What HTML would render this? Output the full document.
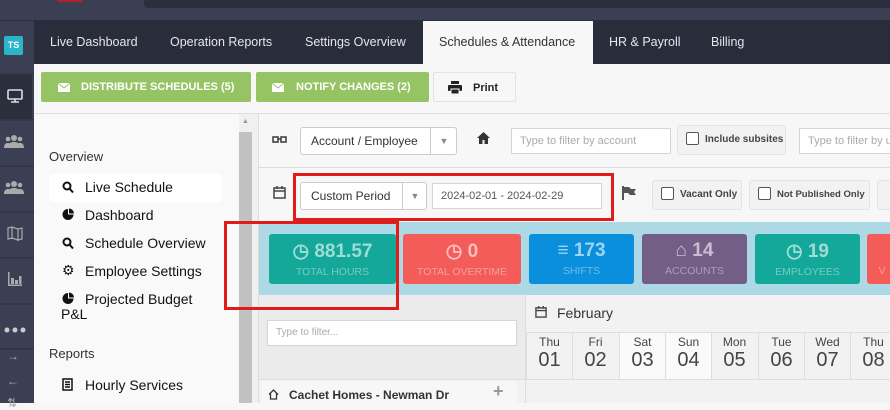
<!DOCTYPE html>
<html><head><style>
*{box-sizing:border-box;margin:0;padding:0}
body{width:890px;height:403px;overflow:hidden;background:#f7f7f7;font-family:"Liberation Sans",Arial,sans-serif;position:relative}
.a{position:absolute}
.top{left:0;top:0;width:890px;height:21px;background:#3b3f53}
.side{left:0;top:21px;width:34px;height:382px;background:#3b3f53}
.sep{position:absolute;left:0;width:34px;height:2px;background:#33364a}
.nav{left:34px;top:21px;width:856px;height:43px;background:#292c3b}
.tab{position:absolute;top:14px;color:#e6e6ea;font-size:12.5px}
.btn{position:absolute;top:72px;height:30px;border-radius:2px;color:#fff;font-weight:bold;font-size:11px;line-height:30px;white-space:nowrap}
.lp{left:34px;top:114px;width:205px;height:289px;background:#f9f9f9}
.it{position:absolute;left:85px;font-size:14px;color:#111;white-space:nowrap}
.ic{position:absolute;left:62px}
.sel{position:absolute;background:#fff;border:1px solid #ccc;border-radius:3px;height:28px;font-size:12px;color:#333;line-height:26px;padding-left:10px}
.inp{position:absolute;background:#fff;border:1px solid #d5d5d5;height:26px;font-size:11px;color:#aaa;line-height:24px;padding-left:8px;white-space:nowrap;overflow:hidden}
.chk{position:absolute;background:#f2f2f2;border:1px solid #e3e3e3;border-radius:3px;height:30px;font-size:10px;font-weight:bold;color:#444;line-height:28px;padding-left:8px;white-space:nowrap;overflow:hidden}
.chk i{display:inline-block;width:13px;height:13px;border:1px solid #555;border-radius:2px;background:#fff;vertical-align:-3px;margin-right:6px}
.card{position:absolute;top:234px;height:50px;border-radius:3px;color:rgba(255,255,255,.4);text-align:center;white-space:nowrap;overflow:hidden}
.card b{display:block;font-size:19px;color:rgba(255,255,255,.6);margin-top:6px}
.card span{display:block;font-size:10.5px;margin-top:3px}
.day{position:absolute;top:333px;width:46px;text-align:center;color:#444;border-left:1px solid #ddd;height:46px}
.day s{text-decoration:none;display:block;font-size:12px;margin-top:2px}
.day u{text-decoration:none;display:block;font-size:20px}
</style></head><body>
<div class="a top"></div>
<div class="a" style="left:144px;top:0;width:746px;height:8px;background:#2b2e3c;border-radius:0 0 0 4px"></div>
<div class="a" style="left:57px;top:0;width:26px;height:2px;background:#b3202a"></div>
<div class="a" style="left:0;top:20px;width:890px;height:1px;background:#2b2e3c"></div>
<div class="a side">
 <div style="position:absolute;left:4px;top:15px;width:19px;height:19px;background:#2bb5c8;border-radius:2px;color:#fff;font-size:9px;font-weight:bold;text-align:center;line-height:19px">TS</div>
 <div class="sep" style="top:52px"></div>
 <div style="position:absolute;left:0;top:54px;width:32px;height:44px;background:#2b2e3d"></div>
 <svg style="position:absolute;left:7px;top:67px" width="16" height="16" viewBox="0 0 16 16" fill="none" stroke="#ddd" stroke-width="1.6"><rect x="1" y="2" width="14" height="9" rx="1"/><path d="M8 11v3M4 14h8"/></svg>
 <div class="sep" style="top:98px"></div>
 <svg style="position:absolute;left:4px;top:113px" width="20" height="14" viewBox="0 0 20 14" fill="#aaa"><circle cx="10" cy="4" r="3"/><path d="M4 14c0-5 3-6 6-6s6 1 6 6z"/><circle cx="4" cy="5" r="2.3"/><circle cx="16" cy="5" r="2.3"/><path d="M0 14c0-4 2-5 4-5s3 1 3 5zM13 14c0-4 1-5 3-5s4 1 4 5z"/></svg>
 <div class="sep" style="top:144px"></div>
 <svg style="position:absolute;left:4px;top:159px" width="20" height="14" viewBox="0 0 20 14" fill="#aaa"><circle cx="10" cy="4" r="3"/><path d="M4 14c0-5 3-6 6-6s6 1 6 6z"/><circle cx="4" cy="5" r="2.3"/><circle cx="16" cy="5" r="2.3"/><path d="M0 14c0-4 2-5 4-5s3 1 3 5zM13 14c0-4 1-5 3-5s4 1 4 5z"/></svg>
 <div class="sep" style="top:190px"></div>
 <svg style="position:absolute;left:7px;top:204px" width="16" height="16" viewBox="0 0 16 16" fill="none" stroke="#aaa" stroke-width="1.2"><path d="M1 3l4-1 6 2 4-1v11l-4 1-6-2-4 1z M5 2v12 M11 4v12"/></svg>
 <div class="sep" style="top:236px"></div>
 <svg style="position:absolute;left:7px;top:250px" width="16" height="16" viewBox="0 0 16 16" fill="#aaa"><rect x="1" y="1" width="1.5" height="14"/><rect x="1" y="13.5" width="14" height="1.5"/><rect x="4" y="7" width="3" height="6"/><rect x="8" y="9" width="3" height="4"/><rect x="12" y="5" width="2.5" height="8"/></svg>
 <div class="sep" style="top:282px"></div>
 <svg style="position:absolute;left:4px;top:306px" width="22" height="6" viewBox="0 0 22 6" fill="#ccc"><circle cx="3" cy="3" r="2.5"/><circle cx="11" cy="3" r="2.5"/><circle cx="19" cy="3" r="2.5"/></svg>
 <div class="sep" style="top:327px"></div>
 <div style="position:absolute;left:7px;top:328px;color:#aaa;font-size:12px">&#8594;</div>
 <div style="position:absolute;left:7px;top:353px;color:#aaa;font-size:12px">&#8592;</div>
 <div style="position:absolute;left:7px;top:375px;color:#aaa;font-size:12px">&#8645;</div>
</div>
<div class="a nav">
 <div class="tab" style="left:16px">Live Dashboard</div>
 <div class="tab" style="left:136px">Operation Reports</div>
 <div class="tab" style="left:271px">Settings Overview</div>
 <div style="position:absolute;left:389px;top:0;width:170px;height:43px;background:#f7f7f7"></div>
 <div class="tab" style="left:405px;color:#333">Schedules &amp; Attendance</div>
 <div class="tab" style="left:575px">HR &amp; Payroll</div>
 <div class="tab" style="left:677px">Billing</div>
</div>
<div class="btn" style="left:41px;width:210px;background:#96c464"><svg style="position:absolute;left:17px;top:11px" width="12" height="9" viewBox="0 0 12 9"><rect width="12" height="9" fill="#fff"/><path d="M0 0l6 5 6-5" fill="none" stroke="#96c464"/></svg><span style="margin-left:40px">DISTRIBUTE SCHEDULES (5)</span></div>
<div class="btn" style="left:256px;width:173px;background:#96c464"><svg style="position:absolute;left:16px;top:11px" width="12" height="9" viewBox="0 0 12 9"><rect width="12" height="9" fill="#fff"/><path d="M0 0l6 5 6-5" fill="none" stroke="#96c464"/></svg><span style="margin-left:40px">NOTIFY CHANGES (2)</span></div>
<div class="btn" style="left:433px;width:83px;background:#f7f7f7;border:1px solid #e3e3e3;color:#222"><svg style="position:absolute;left:14px;top:8px" width="14" height="13" viewBox="0 0 14 13" fill="#222"><rect x="3" y="0" width="8" height="3"/><rect x="0" y="4" width="14" height="6" rx="1"/><rect x="3" y="8" width="8" height="5" fill="#222" stroke="#fff"/></svg><span style="margin-left:39px">Print</span></div>
<div class="a" style="left:34px;top:113px;width:856px;height:1px;background:#e0e0e0"></div>
<div class="a lp">
 <div class="a" style="left:15px;top:35px;font-size:13px;color:#333">Overview</div>
 <div class="a" style="left:15px;top:60px;width:173px;height:28px;background:#fff;border-radius:4px"></div>
</div>
<svg class="ic" style="top:181px" width="12" height="13" viewBox="0 0 12 13" fill="none" stroke="#111" stroke-width="2"><circle cx="5" cy="5" r="3.5"/><path d="M7.5 7.5l3.5 4"/></svg>
<div class="it" style="top:179px">Live Schedule</div>
<svg class="ic" style="top:208px" width="12" height="12" viewBox="0 0 12 12"><circle cx="6" cy="6.5" r="5.5" fill="#111"/><path d="M6 6.5V1A5.5 5.5 0 0 1 11.5 6.5z" fill="#fff"/><path d="M7 5.5V0.5A5 5 0 0 1 12 5.5z" fill="#111"/></svg>
<div class="it" style="top:207px">Dashboard</div>
<svg class="ic" style="top:237px" width="12" height="13" viewBox="0 0 12 13" fill="none" stroke="#111" stroke-width="2"><circle cx="5" cy="5" r="3.5"/><path d="M7.5 7.5l3.5 4"/></svg>
<div class="it" style="top:235px">Schedule Overview</div>
<div class="ic" style="top:262px;font-size:14px;color:#111">&#9881;</div>
<div class="it" style="top:263px">Employee Settings</div>
<svg class="ic" style="top:292px" width="12" height="12" viewBox="0 0 12 12"><circle cx="6" cy="6.5" r="5.5" fill="#111"/><path d="M6 6.5V1A5.5 5.5 0 0 1 11.5 6.5z" fill="#fff"/><path d="M7 5.5V0.5A5 5 0 0 1 12 5.5z" fill="#111"/></svg>
<div class="it" style="top:291px">Projected Budget</div>
<div class="it" style="left:61px;top:306px">P&amp;L</div>
<div class="a" style="left:49px;top:346px;font-size:13px;color:#333">Reports</div>
<svg class="ic" style="top:378px" width="11" height="13" viewBox="0 0 11 13" fill="none" stroke="#111" stroke-width="1.5"><rect x="1" y="1" width="9" height="11"/><path d="M3 4h5M3 6.5h5M3 9h5"/></svg>
<div class="it" style="top:377px">Hourly Services</div>
<div class="a" style="left:239px;top:114px;width:13px;height:289px;background:#f0f0f0"></div>
<div class="a" style="left:239px;top:132px;width:13px;height:271px;background:#c1c1c1"></div>
<div class="a" style="left:242px;top:118px;font-size:7px;color:#999">&#9650;</div>
<div class="a" style="left:252px;top:114px;width:7px;height:289px;background:#f0f0f0"></div>
<div class="a" style="left:258px;top:114px;width:1px;height:289px;background:#ddd"></div>
<svg class="a" style="left:272px;top:135px" width="15" height="10" viewBox="0 0 15 10" fill="none" stroke="#444" stroke-width="1.6"><rect x="1" y="2" width="5" height="5"/><rect x="9" y="2" width="5" height="5"/><path d="M6 4h3"/></svg>
<div class="sel" style="left:300px;top:127px;width:157px">Account / Employee<span style="position:absolute;left:129px;top:0;height:26px;border-left:1px solid #ccc;width:27px;text-align:center;color:#888;font-size:9px">&#9660;</span></div>
<svg class="a" style="left:477px;top:132px" width="13" height="12" viewBox="0 0 13 12" fill="#333"><path d="M6.5 0L0 6h2v6h3.5V8h2v4H11V6h2z"/></svg>
<div class="inp" style="left:511px;top:128px;width:160px">Type to filter by account</div>
<div class="chk" style="left:677px;top:125px;width:109px"><i></i>Include subsites</div>
<div class="inp" style="left:799px;top:128px;width:100px">Type to filter by u</div>
<div class="a" style="left:259px;top:167px;width:631px;height:1px;background:#ddd"></div>
<svg class="a" style="left:273px;top:186px" width="13" height="13" viewBox="0 0 13 13" fill="none" stroke="#444" stroke-width="1.5"><rect x="1" y="2" width="11" height="10"/><path d="M1 5h11M4 0v3M9 0v3"/></svg>
<div class="sel" style="left:300px;top:182px;width:127px">Custom Period<span style="position:absolute;left:101px;top:0;height:26px;border-left:1px solid #ccc;width:25px;text-align:center;color:#888;font-size:9px">&#9660;</span></div>
<div class="inp" style="left:432px;top:183px;width:170px;color:#555;font-size:11px">2024-02-01 - 2024-02-29</div>
<svg class="a" style="left:622px;top:186px" width="14" height="14" viewBox="0 0 14 14" fill="#555"><rect x="0" y="0" width="2" height="14"/><path d="M2 1h5l2 2h5l-2 3 2 3H8L6 7H2z"/></svg>
<div class="chk" style="left:652px;top:180px;width:90px"><i></i>Vacant Only</div>
<div class="chk" style="left:749px;top:180px;width:121px;font-size:9.5px"><i></i>Not Published Only</div>
<div class="chk" style="left:877px;top:180px;width:30px"></div>
<div class="a" style="left:259px;top:222px;width:631px;height:73px;background:#add8e6"></div>
<div class="card" style="left:269px;width:127px;background:#13a89a"><b>&#9719; 881.57</b><span>TOTAL HOURS</span></div>
<div class="card" style="left:403px;width:118px;background:#f35c58"><b>&#9719; 0</b><span>TOTAL OVERTIME</span></div>
<div class="card" style="left:529px;width:105px;background:#0a8fdc"><b>&#8801; 173</b><span>SHIFTS</span></div>
<div class="card" style="left:642px;width:105px;background:#735e87"><b>&#8962; 14</b><span>ACCOUNTS</span></div>
<div class="card" style="left:755px;width:105px;background:#13a89a"><b>&#9719; 19</b><span>EMPLOYEES</span></div>
<div class="card" style="left:867px;width:30px;background:#f35c58"><span style="margin-top:31px">V</span></div>
<div class="a" style="left:259px;top:295px;width:631px;height:108px;background:#f2f2f2"></div>
<div class="a" style="left:259px;top:295px;width:266px;height:84px;background:#ebebeb"></div>
<div class="inp" style="left:267px;top:320px;width:250px;height:26px;font-size:10px">Type to filter...</div>
<div class="a" style="left:525px;top:295px;width:1px;height:108px;background:#ddd"></div>
<svg class="a" style="left:535px;top:306px" width="12" height="12" viewBox="0 0 13 13" fill="none" stroke="#444" stroke-width="1.5"><rect x="1" y="2" width="11" height="10"/><path d="M1 5h11M4 0v3M9 0v3"/></svg>
<div class="a" style="left:557px;top:305px;font-size:14px;color:#333">February</div>
<div class="a" style="left:526px;top:332px;width:364px;height:1px;background:#ddd"></div>
<div class="day" style="left:526px"><s>Thu</s><u>01</u></div>
<div class="day" style="left:572px"><s>Fri</s><u>02</u></div>
<div class="day" style="left:619px;background:#fafafa"><s>Sat</s><u>03</u></div>
<div class="day" style="left:665px;background:#fafafa"><s>Sun</s><u>04</u></div>
<div class="day" style="left:711px"><s>Mon</s><u>05</u></div>
<div class="day" style="left:758px"><s>Tue</s><u>06</u></div>
<div class="day" style="left:804px"><s>Wed</s><u>07</u></div>
<div class="day" style="left:850px"><s>Thu</s><u>08</u></div>
<div class="a" style="left:259px;top:379px;width:631px;height:1px;background:#ddd"></div>
<div class="a" style="left:262px;top:381px;width:255px;height:22px;background:#f7f7f7"></div>
<svg class="a" style="left:268px;top:389px" width="11" height="11" viewBox="0 0 11 11" fill="none" stroke="#333" stroke-width="1.3"><path d="M1 5.5L5.5 1 10 5.5M2.5 4.5V10h6V4.5"/></svg>
<div class="a" style="left:289px;top:388px;font-size:12px;font-weight:bold;color:#333">Cachet Homes - Newman Dr</div>
<div class="a" style="left:493px;top:381px;font-size:18px;font-weight:bold;color:#999">+</div>
<div class="a" style="left:293px;top:173px;width:321px;height:48px;border:3px solid #e01b1b"></div>
<div class="a" style="left:224px;top:221px;width:175px;height:89px;border:3px solid #e01b1b"></div>
</body></html>
